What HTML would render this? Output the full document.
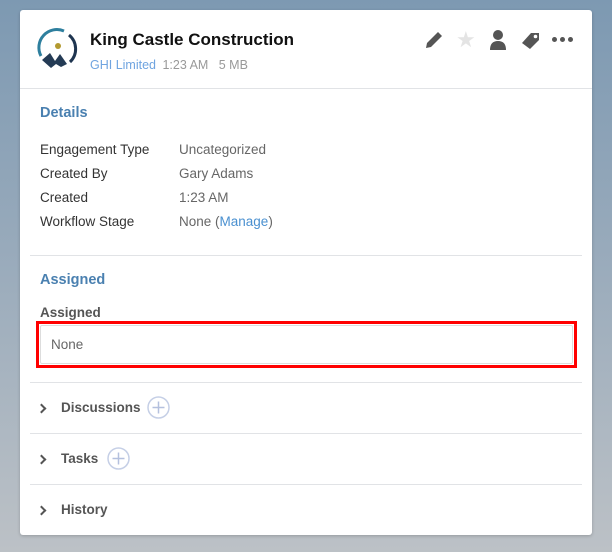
<!DOCTYPE html>
<html><head><meta charset="utf-8"><style>
*{margin:0;padding:0;box-sizing:border-box}
body{width:612px;height:552px;overflow:hidden;font-family:"Liberation Sans",sans-serif;background:linear-gradient(180deg,#7d99b2 0%,#98aabb 45%,#bcc1c6 100%);position:relative}
.card{position:absolute;left:20px;top:10px;width:572px;height:525px;background:#fff;border-radius:3px;box-shadow:0 1px 3px rgba(0,0,0,.2)}
.abs{position:absolute;white-space:nowrap}
.hr{position:absolute;left:10px;right:10px;height:1px;background:#e1e3e6}
.lbl{font-size:13.5px;color:#333}
.val{font-size:13.5px;color:#666}
.sec{font-size:14.5px;color:#4a80b0;font-weight:bold}
.row{font-size:13.5px;color:#555;font-weight:bold}
.chev{position:absolute;width:7px;height:7px;border-right:2px solid #555;border-top:2px solid #555;transform:rotate(45deg)}
.plus{position:absolute;width:23px;height:23px}
</style></head><body>
<div class="card">
<svg class="abs" style="left:16px;top:16px" width="44" height="44" viewBox="0 0 44 44">
<path d="M28 5 A18 18 0 0 0 5 30" fill="none" stroke="#2e7f9e" stroke-width="3"/>
<path d="M33 9 A18 18 0 0 1 34 36" fill="none" stroke="#1f3550" stroke-width="3"/>
<circle cx="22" cy="20" r="3" fill="#b39a30"/>
<path d="M6 34 L14 27 L19 35 L24 28 L31 38 L25 41 L20 38 L15 42 Z" fill="#243b55"/>
</svg>
<div class="abs" style="left:70px;top:20px;font-size:17px;font-weight:bold;color:#111">King Castle Construction</div>
<div class="abs" style="left:70px;top:48px;font-size:12.5px;color:#6fa4e0">GHI Limited <span style="color:#999;margin-left:3px">1:23 AM&nbsp;&nbsp;&nbsp;5 MB</span></div>
<svg class="abs" style="left:404px;top:20px" width="20" height="20" viewBox="0 0 20 20"><path d="M2 18 L3 13 L14 2 L18 6 L7 17 Z" fill="#555"/></svg>
<div class="abs" style="left:436px;top:17px;font-size:22px;color:#e4e4e4">★</div>
<svg class="abs" style="left:468px;top:19px" width="20" height="22" viewBox="0 0 20 22"><circle cx="10" cy="6" r="5" fill="#555"/><path d="M2 21 Q2 12 10 12 Q18 12 18 21 Z" fill="#555"/></svg>
<svg class="abs" style="left:499px;top:20px" width="22" height="20" viewBox="0 0 22 20"><path d="M3 13 L12 3 L20 3 L20 10 L11 19 Z" fill="#555"/><circle cx="16.5" cy="6.5" r="1.8" fill="#fff"/></svg>
<div class="abs" style="left:532px;top:27px;display:flex;gap:3px"><i style="width:5px;height:5px;border-radius:50%;background:#555"></i><i style="width:5px;height:5px;border-radius:50%;background:#555"></i><i style="width:5px;height:5px;border-radius:50%;background:#555"></i></div>
<div class="hr" style="top:78px;left:0;right:0"></div>
<div class="abs sec" style="left:20px;top:95px">Details</div>
<div class="abs lbl" style="left:20px;top:132px">Engagement Type</div><div class="abs val" style="left:159px;top:132px">Uncategorized</div>
<div class="abs lbl" style="left:20px;top:156px">Created By</div><div class="abs val" style="left:159px;top:156px">Gary Adams</div>
<div class="abs lbl" style="left:20px;top:180px">Created</div><div class="abs val" style="left:159px;top:180px">1:23 AM</div>
<div class="abs lbl" style="left:20px;top:204px">Workflow Stage</div><div class="abs val" style="left:159px;top:204px">None (<span style="color:#4a90d0">Manage</span>)</div>
<div class="hr" style="top:245px"></div>
<div class="abs sec" style="left:20px;top:262px">Assigned</div>
<div class="abs" style="left:20px;top:295px;font-size:13.5px;font-weight:bold;color:#555">Assigned</div>
<div class="abs" style="left:16px;top:311px;width:541px;height:47px;border:3px solid #f00"></div>
<div class="abs" style="left:20px;top:315px;width:533px;height:39px;border:1px solid #ddd;border-radius:2px"></div>
<div class="abs val" style="left:31px;top:327px">None</div>
<div class="hr" style="top:372px"></div>
<div class="chev" style="left:18px;top:395px"></div>
<div class="abs row" style="left:41px;top:390px">Discussions</div>
<svg class="plus" style="left:127px;top:386px" viewBox="0 0 23 23"><circle cx="11.5" cy="11.5" r="10.5" fill="none" stroke="#c5cfe6" stroke-width="1.5"/><path d="M11.5 5.5V17.5M5.5 11.5H17.5" stroke="#b4c0de" stroke-width="1.5"/></svg>
<div class="hr" style="top:423px"></div>
<div class="chev" style="left:18px;top:446px"></div>
<div class="abs row" style="left:41px;top:441px">Tasks</div>
<svg class="plus" style="left:87px;top:437px" viewBox="0 0 23 23"><circle cx="11.5" cy="11.5" r="10.5" fill="none" stroke="#c5cfe6" stroke-width="1.5"/><path d="M11.5 5.5V17.5M5.5 11.5H17.5" stroke="#b4c0de" stroke-width="1.5"/></svg>
<div class="hr" style="top:474px"></div>
<div class="chev" style="left:18px;top:497px"></div>
<div class="abs row" style="left:41px;top:492px">History</div>
</div>
</body></html>
